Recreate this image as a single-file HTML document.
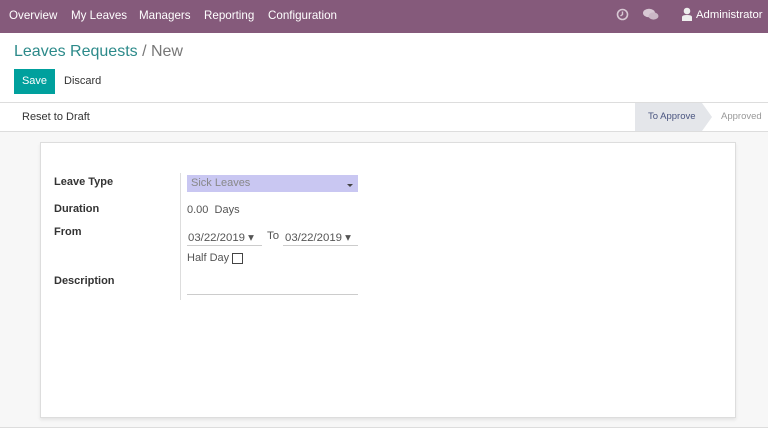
<!DOCTYPE html>
<html><head><meta charset="utf-8"><style>
*{box-sizing:border-box;margin:0;padding:0}
body{width:768px;height:445px;overflow:hidden;font-family:"Liberation Sans",sans-serif;font-size:12px;color:#4c4c4c;background:#fff;position:relative}
.nav{position:absolute;left:0;top:0;width:768px;height:33px;background:#855a7b;color:#fff;font-size:11.6px}
.nav span{position:absolute;top:9px}
.cp{position:absolute;top:33px;left:0;width:768px;height:69px;background:#fff}
.sb{position:absolute;top:102px;left:0;width:768px;height:30px;border-top:1px solid #ddd;border-bottom:1px solid #ddd;background:#fff}
.bg{position:absolute;top:132px;left:0;width:768px;height:296px;background:#f7f7f7;border-bottom:1px solid #ddd}
.sheet{position:absolute;left:40px;top:142px;width:696px;height:276px;background:#fff;border:1px solid #ddd;box-shadow:0 2px 3px rgba(0,0,0,.08)}
.l{position:absolute;font-weight:bold;color:#333;font-size:11px}
.t{position:absolute;font-size:11px;color:#555}
</style></head><body>
<div class="nav">
<span style="left:9px">Overview</span><span style="left:71px">My Leaves</span><span style="left:139px">Managers</span><span style="left:204px">Reporting</span><span style="left:268px">Configuration</span>
<svg style="position:absolute;left:616px;top:8px" width="13" height="13" viewBox="0 0 13 13"><circle cx="6.5" cy="6.5" r="5" fill="none" stroke="#d8c8d4" stroke-width="1.6"/><path d="M6.5 3.5V6.5L4.5 8" stroke="#d8c8d4" stroke-width="1.4" fill="none"/></svg>
<svg style="position:absolute;left:643px;top:8px" width="16" height="13" viewBox="0 0 16 13"><ellipse cx="6" cy="5" rx="6" ry="4.3" fill="#d8c8d4"/><ellipse cx="10.5" cy="8" rx="5" ry="3.6" fill="#cbb7c6"/></svg>
<svg style="position:absolute;left:682px;top:7px" width="10" height="14" viewBox="0 0 10 14"><circle cx="5" cy="4" r="3.3" fill="#eee"/><path d="M0 14V10Q0 8 5 8Q10 8 10 10V14Z" fill="#eee"/></svg>
<span style="left:696px;font-size:11.3px">Administrator</span>
</div>
<div class="cp">
<div style="position:absolute;left:14px;top:10px;font-size:16px;color:#2c8a8a">Leaves Requests <span style="color:#777">/ New</span></div>
<div style="position:absolute;left:14px;top:36px;width:41px;height:25px;background:#00a09d;color:#fff;font-size:11px;text-align:center;line-height:25px">Save</div>
<div style="position:absolute;left:64px;top:42px;font-size:11px;color:#333">Discard</div>
</div>
<div class="sb">
<div style="position:absolute;left:22px;top:8px;font-size:11px;color:#333">Reset to Draft</div>
<div style="position:absolute;left:635px;top:0;width:67px;height:28px;background:#e4e6ea"></div>
<div style="position:absolute;left:702px;top:0;width:0;height:0;border-top:14px solid transparent;border-bottom:14px solid transparent;border-left:10px solid #e4e6ea"></div>
<div style="position:absolute;left:648px;top:8px;font-size:9.5px;color:#4a5580">To Approve</div>
<div style="position:absolute;left:721px;top:8px;font-size:9.5px;color:#999">Approved</div>
</div>
<div class="bg"></div>
<div class="sheet">
<div style="position:absolute;left:139px;top:30px;width:1px;height:127px;background:#ddd"></div>
<div class="l" style="left:13px;top:33px">Leave Type</div>
<div class="l" style="left:13px;top:60px">Duration</div>
<div class="l" style="left:13px;top:83px">From</div>
<div class="l" style="left:13px;top:132px">Description</div>
<div style="position:absolute;left:146px;top:32px;width:171px;height:17px;background:#c9c7f2"></div>
<div class="t" style="left:150px;top:34px;color:#888">Sick Leaves</div>
<div style="position:absolute;left:306px;top:41px;border-left:3px solid transparent;border-right:3px solid transparent;border-top:3px solid #444"></div>
<div class="t" style="left:146px;top:61px">0.00 &nbsp;Days</div>
<div class="t" style="left:147px;top:87px;font-size:11.4px">03/22/2019 ▾</div>
<div style="position:absolute;left:146px;top:102px;width:75px;height:1px;background:#ccc"></div>
<div class="t" style="left:226px;top:87px;font-size:11.4px">To</div>
<div class="t" style="left:244px;top:87px;font-size:11.4px">03/22/2019 ▾</div>
<div style="position:absolute;left:242px;top:102px;width:75px;height:1px;background:#ccc"></div>
<div class="t" style="left:146px;top:109px">Half Day</div>
<div style="position:absolute;left:191px;top:110px;width:11px;height:11px;border:1px solid #444"></div>
<div style="position:absolute;left:146px;top:151px;width:171px;height:1px;background:#ccc"></div>
</div>
</body></html>
